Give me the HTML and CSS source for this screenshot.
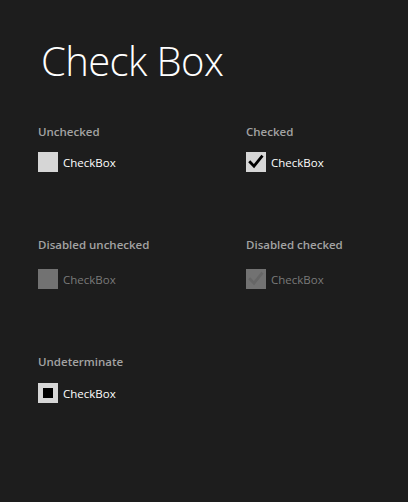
FILE: index.html
```html
<!DOCTYPE html>
<html>
<head>
<meta charset="utf-8">
<link rel="stylesheet" href="styles.css">
</head>
<body>
<div class="page">
  <h1 class="title">Check Box</h1>
  <div class="grid">
    <div class="cell">
      <div class="label">Unchecked</div>
      <div class="cb"><span class="box"></span><span class="txt">CheckBox</span></div>
    </div>
    <div class="cell">
      <div class="label">Checked</div>
      <div class="cb"><span class="box"><svg viewBox="0 0 20 20" width="20" height="20"><path d="M4.2 10.2 L8 14.2 L15.6 4.8" fill="none" stroke="#000" stroke-width="2.8" stroke-linecap="square"/></svg></span><span class="txt">CheckBox</span></div>
    </div>
    <div class="cell">
      <div class="label">Disabled unchecked</div>
      <div class="cb disabled wide"><span class="box"></span><span class="txt">CheckBox</span></div>
    </div>
    <div class="cell">
      <div class="label">Disabled checked</div>
      <div class="cb disabled wide"><span class="box"><svg viewBox="0 0 20 20" width="20" height="20"><path d="M4.2 10.2 L8 14.2 L15.6 4.8" fill="none" stroke="#666" stroke-width="2.8" stroke-linecap="square"/></svg></span><span class="txt">CheckBox</span></div>
    </div>
    <div class="cell">
      <div class="label">Undeterminate</div>
      <div class="cb mid"><span class="box ind"><span class="sq"></span></span><span class="txt">CheckBox</span></div>
    </div>
  </div>
</div>
</body>
</html>
```
FILE: styles.css
```css
html, body {
  margin: 0;
  padding: 0;
  background: #1d1d1d;
}
body {
  width: 408px;
  height: 502px;
  overflow: hidden;
  font-family: "Open Sans", "Noto Sans", sans-serif;
}
.page {
  padding: 34px 0 0 38px;
}
.title {
  margin: 0 0 0 3px;
  font-weight: 300;
  font-size: 40px;
  line-height: 54px;
  color: #ffffff;
  letter-spacing: -0.6px;
}
.grid {
  margin-top: 36px;
  display: grid;
  grid-template-columns: 208px 150px;
  row-gap: 65px;
}
.label {
  font-size: 11.5px;
  font-weight: 600;
  color: #a3a3a3;
  line-height: 16px;
  height: 16px;
}
.cb {
  margin-top: 12px;
  display: flex;
  align-items: center;
  gap: 5px;
  height: 20px;
}
.cb.wide { margin-top: 16px; }
.cb.mid { margin-top: 13px; }
.box {
  width: 20px;
  height: 20px;
  background: #d6d6d6;
  display: flex;
  align-items: center;
  justify-content: center;
}
.box svg { display: block; }
.txt {
  font-size: 11.5px;
  color: #ffffff;
}
.disabled .box { background: #727272; }
.disabled .txt { color: #7a7a7a; }
.ind .sq {
  width: 10px;
  height: 10px;
  background: #000;
}
```
